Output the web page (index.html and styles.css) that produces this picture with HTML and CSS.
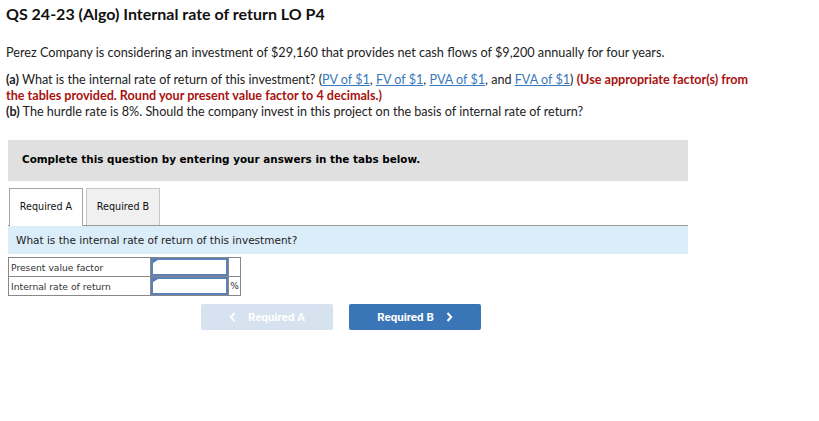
FILE: index.html
```html
<!DOCTYPE html>
<html lang="en">
<head>
    <meta charset="UTF-8">
    <title>QS 24-23 (Algo) Internal rate of return LO P4</title>
    <link rel="stylesheet" href="styles.css">
</head>
<body>
    <div class="page">
        <h1 class="title">QS 24-23 (Algo) Internal rate of return LO P4</h1>

        <p class="intro">Perez Company is considering an investment of $29,160 that provides net cash flows of $9,200 annually for four years.</p>

        <p class="parts">
            <b>(a)</b> What is the internal rate of return of this investment? (<a href="#">PV of $1</a>, <a href="#">FV of $1</a>, <a href="#">PVA of $1</a>, and <a href="#">FVA of $1</a>) <span class="warn">(Use appropriate factor(s) from</span>
            <span class="warn">the tables provided. Round your present value factor to 4 decimals.)</span><br>
            <b>(b)</b> The hurdle rate is 8%. Should the company invest in this project on the basis of internal rate of return?
        </p>

        <div class="notice">Complete this question by entering your answers in the tabs below.</div>

        <div class="tabs">
            <div class="tab active">Required A</div>
            <div class="tab">Required B</div>
        </div>

        <div class="prompt">What is the internal rate of return of this investment?</div>

        <table class="answers">
            <tr>
                <td class="label">Present value factor</td>
                <td class="field"><input type="text"></td>
                <td class="unit"></td>
            </tr>
            <tr>
                <td class="label">Internal rate of return</td>
                <td class="field"><input type="text"></td>
                <td class="unit">%</td>
            </tr>
        </table>

        <div class="nav">
            <button class="nav-btn disabled" type="button">
                <svg class="chev left" width="7" height="10" viewBox="0 0 7 10"><path d="M5.5 1 L1.8 5 L5.5 9" fill="none" stroke="currentColor" stroke-width="2"/></svg>
                Required A
            </button>
            <button class="nav-btn" type="button">
                Required B
                <svg class="chev right" width="7" height="10" viewBox="0 0 7 10"><path d="M1.5 1 L5.2 5 L1.5 9" fill="none" stroke="currentColor" stroke-width="2"/></svg>
            </button>
        </div>
    </div>
</body>
</html>
```

FILE: styles.css
```css
/* General */
body {
    margin: 0;
    background: #fff;
    font-family: Lato, "Open Sans", sans-serif;
    color: #222;
}

.page {
    padding: 4px 8px 0 8px;
}

/* Heading */
.title {
    font-size: 16px;
    font-weight: 700;
    margin: 0 0 21px -2px;
    color: #111;
}

.intro {
    font-size: 12.7px;
    margin: 0 0 12px -2px;
    white-space: nowrap;
}

.parts {
    width: 752px;
    font-size: 12.6px;
    line-height: 16px;
    margin: 0 0 20px -2px;
}

.parts a {
    color: #3a78bd;
}

.warn {
    color: #a8120f;
    font-weight: 700;
}

/* Gray notice */
.notice {
    width: 666px;
    background: #e0e0e0;
    height: 41px;
    line-height: 38px;
    padding-left: 14px;
    font-family: "DejaVu Sans", Verdana, sans-serif;
    font-size: 10.4px;
    font-weight: 700;
    color: #000;
}

/* Tabs */
.tabs {
    width: 679px;
    display: flex;
    gap: 3px;
    margin-top: 7px;
    padding-left: 1px;
    border-bottom: 1px solid #999;
}

.tab {
    width: 72px;
    height: 36px;
    line-height: 36px;
    text-align: center;
    font-family: "DejaVu Sans", Verdana, sans-serif;
    font-size: 9.6px;
    color: #111;
    background: #f0f0f0;
    border: 1px solid #c6c6c6;
    border-bottom: none;
}

.tab.active {
    background: #fff;
    border-color: #a5a5a5;
    margin-bottom: -1px;
    height: 37px;
}

.prompt {
    width: 672px;
    background: #dbedf9;
    height: 28px;
    line-height: 29px;
    padding-left: 8px;
    font-family: "DejaVu Sans", Verdana, sans-serif;
    font-size: 10.5px;
    color: #222;
}

/* Answer table */
.answers {
    border-collapse: collapse;
    margin-top: 3px;
    font-family: "DejaVu Sans", Verdana, sans-serif;
    font-size: 9.2px;
    color: #333;
}

.answers td {
    border: 1px solid #888;
    height: 17px;
    padding: 0;
}

.answers .label {
    width: 139px;
    padding-left: 2px;
}

.answers .field {
    width: 77px;
    position: relative;
}

.answers .field::before {
    content: "";
    position: absolute;
    left: 2px;
    top: 2px;
    border-top: 3px solid #4a78c0;
    border-right: 5px solid transparent;
}

.answers input {
    display: block;
    width: 77px;
    height: 18px;
    margin: 0;
    padding: 0;
    border: 2px solid #5a82b8;
    box-sizing: border-box;
    background: transparent;
}

.answers .unit {
    width: 11px;
    font-size: 9px;
    text-align: center;
}

/* Nav buttons */
.nav {
    display: flex;
    gap: 16px;
    margin: 8px 0 0 193px;
}

.nav-btn {
    width: 132px;
    height: 26px;
    border: none;
    border-radius: 2px;
    background: #3a75b8;
    color: #fff;
    font-family: Roboto, "Liberation Sans", sans-serif;
    font-size: 11.5px;
    font-weight: 700;
    cursor: pointer;
    display: flex;
    align-items: center;
    justify-content: center;
}

.nav-btn.disabled {
    background: #d6e2f0;
    cursor: default;
}

.chev.left {
    margin-right: 12px;
}

.chev.right {
    margin-left: 12px;
}
```
